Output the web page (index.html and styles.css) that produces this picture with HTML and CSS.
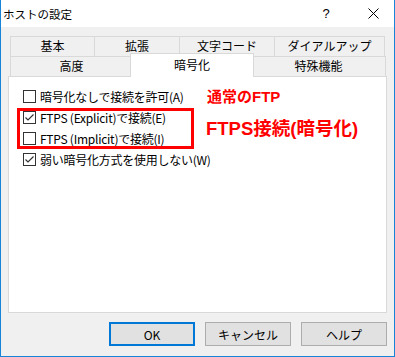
FILE: index.html
```html
<!DOCTYPE html>
<html lang="ja">
<head>
<meta charset="utf-8">
<title>ホストの設定</title>
<link rel="stylesheet" href="styles.css">
</head>
<body>
<div class="window">
  <div class="titlebar">
    <span class="title">ホストの設定</span>
    <span class="help">?</span>
    <span class="close"><svg width="11" height="11" viewBox="0 0 11 11"><path d="M0.5 0.5L10.5 10.5M10.5 0.5L0.5 10.5" stroke="#000" stroke-width="1" fill="none"/></svg></span>
  </div>
  <div class="body">
    <div class="tabs">
      <div class="tabrow">
        <div class="tab w85">基本</div>
        <div class="tab w86">拡張</div>
        <div class="tab w96">文字コード</div>
        <div class="tab w111">ダイアルアップ</div>
      </div>
      <div class="tabrow row2">
        <div class="tab w123">高度</div>
        <div class="tab selected">暗号化</div>
        <div class="tab w135">特殊機能</div>
      </div>
    </div>
    <div class="panel">
      <div class="opt"><span class="cb"></span><span class="lbl">暗号化なしで接続を許可(A)</span></div>
      <div class="opt"><span class="cb checked"><svg width="11" height="11" viewBox="0 0 11 11"><path d="M1.5 5.5L4 8L9.5 2.5" stroke="#333" stroke-width="1.2" fill="none"/></svg></span><span class="lbl">FTPS (Explicit)で接続(E)</span></div>
      <div class="opt"><span class="cb"></span><span class="lbl">FTPS (Implicit)で接続(I)</span></div>
      <div class="opt"><span class="cb checked"><svg width="11" height="11" viewBox="0 0 11 11"><path d="M1.5 5.5L4 8L9.5 2.5" stroke="#333" stroke-width="1.2" fill="none"/></svg></span><span class="lbl">弱い暗号化方式を使用しない(W)</span></div>
      <div class="redbox"></div>
      <div class="note note1">通常のFTP</div>
      <div class="note note2">FTPS接続(暗号化)</div>
    </div>
    <div class="buttons">
      <button class="btn default">OK</button>
      <button class="btn">キャンセル</button>
      <button class="btn">ヘルプ</button>
    </div>
  </div>
</div>
</body>
</html>
```
FILE: styles.css
```css
* { box-sizing: border-box; }
html, body { margin: 0; padding: 0; }
body {
  font-family: "Noto Sans CJK JP", "Liberation Sans", sans-serif;
  font-size: 12px;
  color: #000;
  background: #fff;
}
.window {
  width: 395px;
  height: 357px;
  border: 1px solid #1883d7;
  border-top: none;
  display: flex;
  flex-direction: column;
  overflow: hidden;
}
.titlebar {
  height: 27px;
  background: #fff;
  display: flex;
  align-items: center;
  flex: none;
}
.title {
  padding-left: 2px;
  font-size: 11.5px;
  letter-spacing: 0;
  flex: 1;
}
.help {
  width: 20px;
  text-align: center;
  font-family: "Liberation Sans", sans-serif;
  font-size: 13px;
  margin-right: 32px;
}
.close {
  width: 11px;
  height: 11px;
  margin-right: 15px;
  display: flex;
}
.body {
  flex: 1;
  background: #f0f0f0;
  padding: 9px 7px 0 7px;
  display: flex;
  flex-direction: column;
}
.tabs {
  padding-left: 2px;
}
.tabrow {
  display: flex;
  height: 20px;
}
.tab {
  border: 1px solid #d9d9d9;
  border-bottom: none;
  background: #f0f0f0;
  margin-left: -1px;
  text-align: center;
  line-height: 18px;
  height: 20px;
}
.tabrow .tab:first-child { margin-left: 0; }
.w85 { width: 85px; }
.w86 { width: 86px; }
.w96 { width: 96px; }
.w111 { width: 111px; }
.w123 { width: 123px; }
.w135 { width: 135px; }
.tab.selected {
  width: 124px;
  height: 24px;
  margin: -3px -2px -1px -3px;
  background: #fff;
  position: relative;
  z-index: 1;
  line-height: 22px;
}
.panel {
  position: relative;
  height: 237px;
  background: #fff;
  border: 1px solid #d9d9d9;
  padding: 9px 0 0 14px;
  flex: none;
}
.opt {
  display: flex;
  align-items: center;
  height: 21px;
}
.cb {
  width: 13px;
  height: 13px;
  border: 1px solid #333;
  background: #fff;
  display: flex;
  align-items: center;
  justify-content: center;
  margin-right: 4px;
  flex: none;
}
.lbl {
  letter-spacing: -0.25px;
}
.redbox {
  position: absolute;
  left: 8px;
  top: 31px;
  width: 177px;
  height: 41px;
  border: 3px solid #ff0000;
}
.note {
  position: absolute;
  color: #ff0000;
  font-weight: bold;
  font-family: "Liberation Sans", "Noto Sans CJK JP", sans-serif;
  white-space: nowrap;
}
.note1 {
  left: 198px;
  top: 10px;
  font-size: 15px;
  line-height: 20px;
}
.note2 {
  left: 197px;
  top: 40px;
  font-size: 18.5px;
  line-height: 24px;
}
.buttons {
  display: flex;
  justify-content: flex-end;
  gap: 10px;
  margin-top: 9px;
}
.btn {
  width: 86px;
  height: 24px;
  background: #e1e1e1;
  border: 1px solid #adadad;
  font-family: "Noto Sans CJK JP", sans-serif;
  font-size: 12px;
  color: #000;
  padding: 0;
  margin: 0;
}
.btn.default {
  border: 2px solid #0078d7;
}
```
